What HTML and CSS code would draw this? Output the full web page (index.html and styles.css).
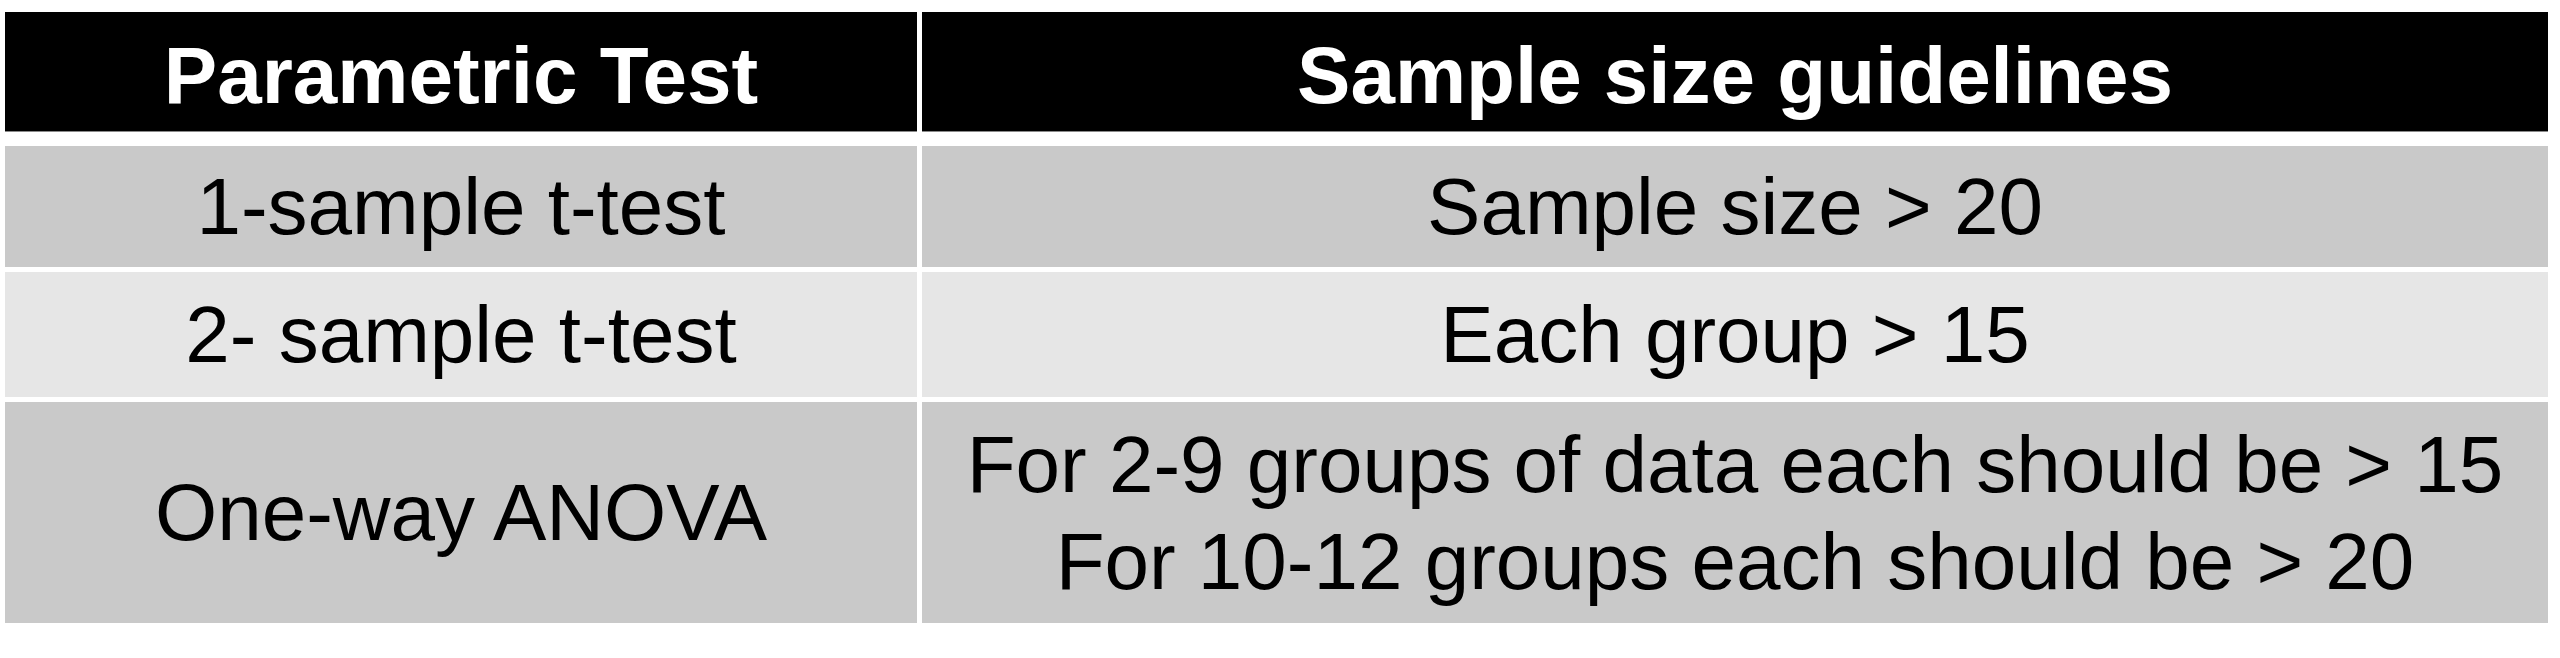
FILE: index.html
```html
<!DOCTYPE html>
<html lang="en">
<head>
<meta charset="utf-8">
<title>Parametric test sample size guidelines</title>
<link rel="stylesheet" href="styles.css">
</head>
<body>
<div class="table">
  <div class="row head">
    <div class="cell">Parametric Test</div>
    <div class="cell">Sample size guidelines</div>
  </div>
  <div class="row r1 dark">
    <div class="cell">1-sample t-test</div>
    <div class="cell">Sample size &gt; 20</div>
  </div>
  <div class="row r2 light">
    <div class="cell">2- sample t-test</div>
    <div class="cell">Each group &gt; 15</div>
  </div>
  <div class="row r3 dark">
    <div class="cell">One-way ANOVA</div>
    <div class="cell multi">
      <span>For 2-9 groups of data each should be &gt; 15</span>
      <span>For 10-12 groups each should be &gt; 20</span>
    </div>
  </div>
</div>
</body>
</html>
```

FILE: styles.css
```css
html, body {
  margin: 0;
  padding: 0;
  background: #ffffff;
}

body {
  font-family: "Liberation Sans", Arial, sans-serif;
  color: #000000;
}

.table {
  display: flex;
  flex-direction: column;
  gap: 5px;
  width: 2543px;
  margin: 12px 0 0 5px;
}

.row {
  display: grid;
  grid-template-columns: 912px 1626px;
  column-gap: 5px;
}

.cell {
  display: flex;
  align-items: center;
  justify-content: center;
  text-align: center;
  font-size: 80px;
  line-height: 1.2;
  white-space: nowrap;
}

.head {
  height: 120px;
  margin-bottom: 9px;
}

.head .cell {
  background: #000000;
  color: #ffffff;
  font-weight: bold;
  padding-top: 8px;
  box-sizing: border-box;
  border-bottom: 1px solid #8a8a8a;
}

.r1 { height: 121px; }
.r2 { height: 125px; }
.r3 { height: 221px; }

.dark .cell { background: #c9c9c9; }
.light .cell { background: #e6e6e6; }

.multi {
  flex-direction: column;
  line-height: 97px;
}
```
